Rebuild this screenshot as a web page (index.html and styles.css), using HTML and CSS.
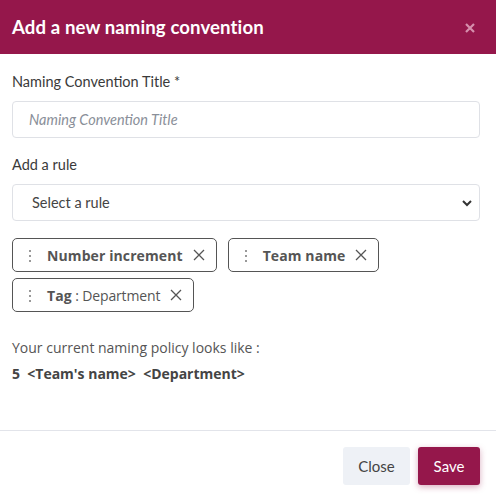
FILE: index.html
```html
<!DOCTYPE html>
<html>
<head>
<meta charset="utf-8">
<link rel="stylesheet" href="styles.css">
</head>
<body>
<div class="modal">
  <div class="modal-header">
    <h1 class="modal-title">Add a new naming convention</h1>
    <span class="close-x">
      <svg width="10" height="10" viewBox="0 0 10 10"><path d="M1 1 L9 9 M9 1 L1 9" stroke="currentColor" stroke-width="2.2"/></svg>
    </span>
  </div>
  <div class="modal-body">
    <label class="field-label">Naming Convention Title *</label>
    <div class="input">Naming Convention Title</div>
    <label class="field-label second">Add a rule</label>
    <div class="select">
      <span>Select a rule</span>
      <svg class="chev" width="12" height="8" viewBox="0 0 12 8"><path d="M2 2 L6 6 L10 2" fill="none" stroke="#333" stroke-width="2"/></svg>
    </div>
    <div class="chips">
      <div class="chip"><svg class="dots" width="4" height="14" viewBox="0 0 4 14"><circle cx="2" cy="2" r="1"/><circle cx="2" cy="7" r="1"/><circle cx="2" cy="12" r="1"/></svg><b>Number increment</b><svg class="x" width="12" height="12" viewBox="0 0 12 12"><path d="M1 1 L11 11 M11 1 L1 11" stroke="#555" stroke-width="1.3"/></svg></div>
      <div class="chip"><svg class="dots" width="4" height="14" viewBox="0 0 4 14"><circle cx="2" cy="2" r="1"/><circle cx="2" cy="7" r="1"/><circle cx="2" cy="12" r="1"/></svg><b>Team name</b><svg class="x" width="12" height="12" viewBox="0 0 12 12"><path d="M1 1 L11 11 M11 1 L1 11" stroke="#555" stroke-width="1.3"/></svg></div>
      <div class="chip"><svg class="dots" width="4" height="14" viewBox="0 0 4 14"><circle cx="2" cy="2" r="1"/><circle cx="2" cy="7" r="1"/><circle cx="2" cy="12" r="1"/></svg><span class="tag"><b>Tag</b> : Department</span><svg class="x" width="12" height="12" viewBox="0 0 12 12"><path d="M1 1 L11 11 M11 1 L1 11" stroke="#555" stroke-width="1.3"/></svg></div>
    </div>
    <div class="policy">
      <div>Your current naming policy looks like :</div>
      <div class="policy-value">5&nbsp;&nbsp;&lt;Team's name&gt;&nbsp;&nbsp;&lt;Department&gt;</div>
    </div>
  </div>
  <div class="modal-footer">
    <button class="btn btn-light">Close</button>
    <button class="btn btn-primary">Save</button>
  </div>
</div>
</body>
</html>
```
FILE: styles.css
```css
html, body { margin: 0; padding: 0; background: #fff; }
body { font-family: "Lato", "Open Sans", sans-serif; color: #333; }
.modal { width: 496px; }
.modal-header {
  height: 54px;
  background: #95174b;
  display: flex;
  align-items: center;
  justify-content: space-between;
  padding: 0 21px 0 12px;
  box-sizing: border-box;
}
.modal-title {
  margin: 0;
  color: #fff;
  font-family: "Lato", sans-serif;
  font-weight: 700;
  font-size: 18.6px;
  letter-spacing: 0.1px;
}
.close-x { color: #d690ad; display: flex; margin-top: 2px; }
.modal-body { padding: 17px 16px 0 12px; }
.field-label {
  display: block;
  font-size: 14.5px;
  line-height: 21px;
  color: #3a3a3a;
  margin-bottom: 9px;
}
.field-label.second { margin-top: 16px; }
.input, .select {
  height: 37px;
  box-sizing: border-box;
  border: 1px solid #dfe1e6;
  border-radius: 4px;
  display: flex;
  align-items: center;
  font-size: 14.5px;
}
.input { padding-left: 16px; color: #8a8f99; font-style: italic; }
.select { padding: 0 6px 0 19px; justify-content: space-between; color: #444; }
.chev { margin-top: 1px; }
.chips {
  margin-top: 17px;
  display: flex;
  flex-wrap: wrap;
  gap: 6px 11px;
  width: 400px;
}
.chip {
  height: 34px;
  box-sizing: border-box;
  border: 1px solid #555;
  border-radius: 5px;
  display: flex;
  align-items: center;
  padding: 0 11px 0 15px;
  font-family: "Open Sans", sans-serif;
  font-size: 14px;
  color: #555;
}
.chip b { font-weight: 700; letter-spacing: 0.1px; }
.tag { letter-spacing: -0.15px; }
.dots { fill: #777; margin-right: 15px; margin-top: 1px; }
.chip .x { margin-left: 10px; }
.policy {
  margin-top: 23px;
  font-family: "Open Sans", sans-serif;
  font-size: 14px;
  line-height: 26px;
  color: #555;
}
.policy-value { font-weight: 700; color: #444; }
.modal-footer {
  margin-top: 43px;
  border-top: 1px solid #e2e4ea;
  padding: 16px 16px 13px;
  display: flex;
  justify-content: flex-end;
  gap: 8px;
}
.btn {
  height: 38px;
  border: none;
  border-radius: 3px;
  font-family: "Lato", sans-serif;
  font-size: 15px;
  padding: 0 15px;
}
.btn-light { background: #eef1f6; color: #444; width: 67px; }
.btn-primary { background: #95174b; color: #fff; width: 62px; box-shadow: 0 2px 6px rgba(149,23,75,0.35); }
```
